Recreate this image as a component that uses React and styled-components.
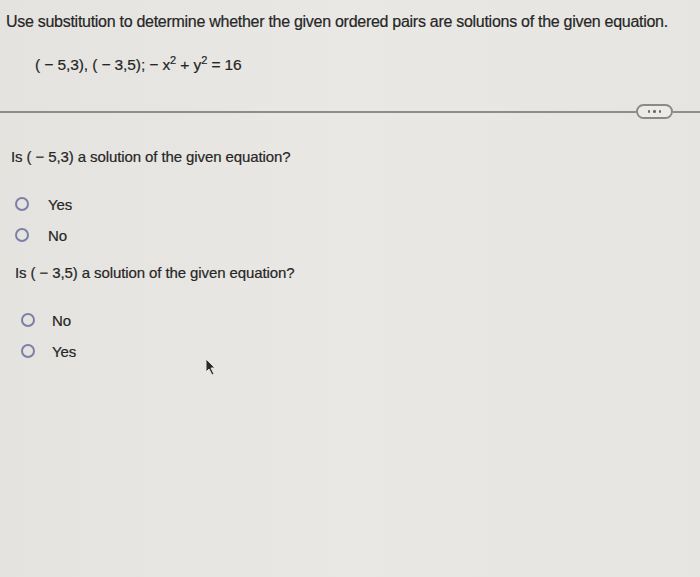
import React from 'react';
import styled, { createGlobalStyle } from 'styled-components';

const GlobalStyle = createGlobalStyle`
	html, body {
		margin: 0;
		padding: 0;
		background: #e6e5e1;
	}
	body {
		font-family: "Liberation Sans", Arial, sans-serif;
		color: #262626;
	}
`;

const Page = styled.div`
	width: 700px;
	height: 577px;
	overflow: hidden;
	position: relative;
	background: linear-gradient(90deg, #e4e3df 0%, #e9e8e4 50%, #e6e5e1 100%);
`;

const Header = styled.div`
	padding: 12px 0 0 6px;
`;

const Instructions = styled.p`
	margin: 0;
	font-size: 16px;
	letter-spacing: -0.28px;
	line-height: 20px;
	-webkit-text-stroke: 0.2px #262626;
`;

const Equation = styled.p`
	margin: 18px 0 0 29px;
	font-size: 15.5px;
	letter-spacing: -0.1px;
	line-height: 20px;
	-webkit-text-stroke: 0.2px #262626;
`;

const Divider = styled.div`
	margin-top: 29px;
	display: flex;
	align-items: center;
`;

const Rule = styled.div`
	flex: ${(p) => (p.grow ? 1 : 'none')};
	width: ${(p) => (p.grow ? 'auto' : '27px')};
	height: 2px;
	background: #8d8d8b;
`;

const MoreButton = styled.div`
	width: 33px;
	height: 11px;
	border: 2px solid #8a8a88;
	border-radius: 8px;
	display: flex;
	align-items: center;
	justify-content: center;
	gap: 3px;
	background: #ecebe7;
`;

const Dot = styled.span`
	width: 2.5px;
	height: 2.5px;
	border-radius: 50%;
	background: #6b6b6b;
`;

const Question = styled.p`
	margin: ${(p) => p.margin};
	font-size: 15px;
	letter-spacing: -0.1px;
	line-height: 20px;
	-webkit-text-stroke: 0.2px #262626;
`;

const Options = styled.div`
	display: flex;
	flex-direction: column;
	gap: 11px;
	margin: ${(p) => p.margin};
`;

const Option = styled.label`
	display: flex;
	align-items: center;
	height: 20px;
	font-size: 15px;
	letter-spacing: -0.1px;
	-webkit-text-stroke: 0.2px #262626;
`;

const Radio = styled.span`
	width: 10px;
	height: 10px;
	border: 2px solid #7c80a6;
	border-radius: 50%;
	box-sizing: content-box;
	margin-right: ${(p) => p.gap}px;
`;

const Cursor = styled.svg`
	position: absolute;
	left: 204px;
	top: 358px;
`;

export default function App() {
	return (
		<>
			<GlobalStyle />
			<Page>
				<Header>
					<Instructions>
						Use substitution to determine whether the given ordered pairs are solutions of the given equation.
					</Instructions>
					<Equation>
						( − 5,3), ( − 3,5); − x<sup style={{ fontSize: '11px' }}>2</sup> + y<sup style={{ fontSize: '11px' }}>2</sup> = 16
					</Equation>
				</Header>
				<Divider>
					<Rule grow />
					<MoreButton>
						<Dot />
						<Dot />
						<Dot />
					</MoreButton>
					<Rule />
				</Divider>

				<Question margin="28px 0 0 11px">Is ( − 5,3) a solution of the given equation?</Question>
				<Options margin="27px 0 0 15px">
					<Option>
						<Radio gap={19} />
						Yes
					</Option>
					<Option>
						<Radio gap={19} />
						No
					</Option>
				</Options>

				<Question margin="18px 0 0 15px">Is ( − 3,5) a solution of the given equation?</Question>
				<Options margin="27px 0 0 21px">
					<Option>
						<Radio gap={17} />
						No
					</Option>
					<Option>
						<Radio gap={17} />
						Yes
					</Option>
				</Options>

				<Cursor width="14" height="18" viewBox="0 0 14 18">
					<path d="M2 1 L2 14 L5 11 L8 17 L10 16 L7 10 L11 10 Z" fill="#2a2a2a" stroke="#e6e5e1" strokeWidth="1" />
				</Cursor>
			</Page>
		</>
	);
}
